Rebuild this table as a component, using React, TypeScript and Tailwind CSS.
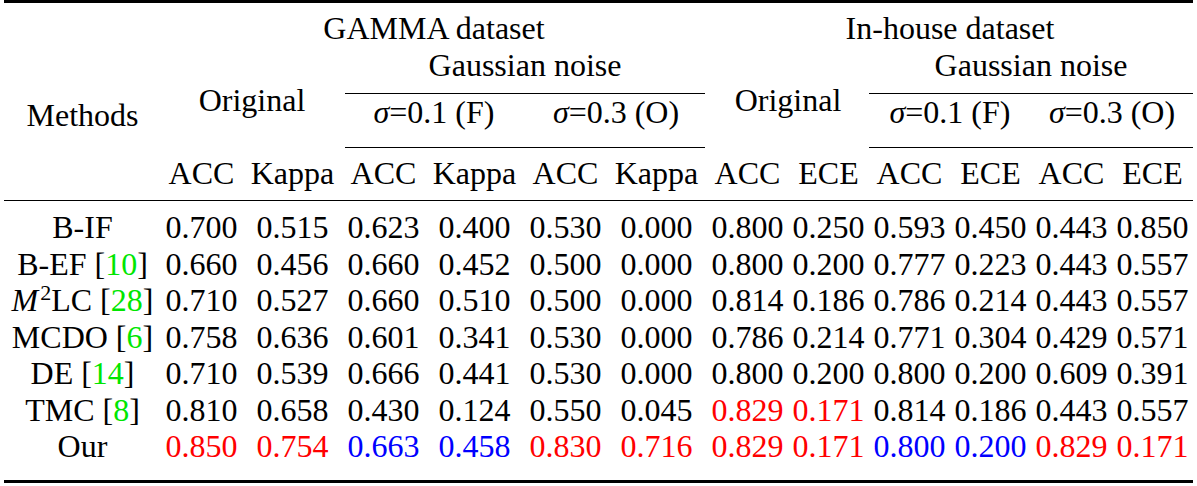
import type { ReactNode } from "react";

type Row = { method: ReactNode; values: string[]; colors: string };

const cite = (n: string) => (
  <>
    {" "}[<span className="text-[#00e600]">{n}</span>]
  </>
);

const rows: Row[] = [
  {
    method: "B-IF",
    values: ["0.700", "0.515", "0.623", "0.400", "0.530", "0.000", "0.800", "0.250", "0.593", "0.450", "0.443", "0.850"],
    colors: "kkkkkkkkkkkk",
  },
  {
    method: <>B-EF{cite("10")}</>,
    values: ["0.660", "0.456", "0.660", "0.452", "0.500", "0.000", "0.800", "0.200", "0.777", "0.223", "0.443", "0.557"],
    colors: "kkkkkkkkkkkk",
  },
  {
    method: (
      <>
        <i>M</i>
        <sup className="ml-[2px] text-[22px]">2</sup>LC{cite("28")}
      </>
    ),
    values: ["0.710", "0.527", "0.660", "0.510", "0.500", "0.000", "0.814", "0.186", "0.786", "0.214", "0.443", "0.557"],
    colors: "kkkkkkkkkkkk",
  },
  {
    method: <>MCDO{cite("6")}</>,
    values: ["0.758", "0.636", "0.601", "0.341", "0.530", "0.000", "0.786", "0.214", "0.771", "0.304", "0.429", "0.571"],
    colors: "kkkkkkkkkkkk",
  },
  {
    method: <>DE{cite("14")}</>,
    values: ["0.710", "0.539", "0.666", "0.441", "0.530", "0.000", "0.800", "0.200", "0.800", "0.200", "0.609", "0.391"],
    colors: "kkkkkkkkkkkk",
  },
  {
    method: <>TMC{cite("8")}</>,
    values: ["0.810", "0.658", "0.430", "0.124", "0.550", "0.045", "0.829", "0.171", "0.814", "0.186", "0.443", "0.557"],
    colors: "kkkkkkrrkkkk",
  },
  {
    method: "Our",
    values: ["0.850", "0.754", "0.663", "0.458", "0.830", "0.716", "0.829", "0.171", "0.800", "0.200", "0.829", "0.171"],
    colors: "rrbbrrrrbbrr",
  },
];

const colorClass: Record<string, string> = {
  k: "text-black",
  r: "text-[#ff0000]",
  b: "text-[#0000ff]",
};

const metrics = ["ACC", "Kappa", "ACC", "Kappa", "ACC", "Kappa", "ACC", "ECE", "ACC", "ECE", "ACC", "ECE"];

const cols = "grid-cols-[157px_81px_101px_81px_101px_81px_101px_81px_81px_81px_81px_81px_81px]";

const Sigma = ({ v, l }: { v: string; l: string }) => (
  <>
    <i>σ</i>={v} ({l})
  </>
);

export default function App() {
  return (
    <div className="h-[486px] w-[1197px] bg-white pl-[4px] text-black font-['Liberation_Serif',serif] text-[32px]">
      <div className="w-[1189px]">
        <div className="h-[3px] bg-black" />

        <div className={`grid ${cols} grid-rows-[44px_46px_1px_53px_1px_52px] text-center leading-[36px] whitespace-nowrap`}>
          <div className="col-start-1 row-start-1 row-span-6 pt-[94px]">Methods</div>

          <div className="col-start-2 col-span-6 row-start-1 pt-[7px]">GAMMA dataset</div>
          <div className="col-start-8 col-span-6 row-start-1 pt-[7px]">In-house dataset</div>

          <div className="col-start-2 col-span-2 row-start-2 row-span-4 pt-[35px]">Original</div>
          <div className="col-start-8 col-span-2 row-start-2 row-span-4 pt-[35px]">Original</div>

          <div className="col-start-4 col-span-4 row-start-2">Gaussian noise</div>
          <div className="col-start-10 col-span-4 row-start-2">Gaussian noise</div>

          <div className="col-start-4 col-span-4 row-start-3 mx-[2px] bg-black" />
          <div className="col-start-10 col-span-4 row-start-3 bg-black" />

          <div className="col-start-4 col-span-2 row-start-4">
            <Sigma v="0.1" l="F" />
          </div>
          <div className="col-start-6 col-span-2 row-start-4">
            <Sigma v="0.3" l="O" />
          </div>
          <div className="col-start-10 col-span-2 row-start-4">
            <Sigma v="0.1" l="F" />
          </div>
          <div className="col-start-12 col-span-2 row-start-4">
            <Sigma v="0.3" l="O" />
          </div>

          <div className="col-start-4 col-span-4 row-start-5 mx-[2px] bg-black" />
          <div className="col-start-10 col-span-4 row-start-5 bg-black" />

          <div className="col-start-1 row-start-6" />
          {metrics.map((m, i) => (
            <div key={i} className="row-start-6 pt-[7px]">
              {m}
            </div>
          ))}
        </div>

        <div className="h-px bg-black" />

        <div className={`grid ${cols} auto-rows-[36.5px] pt-[8px] pb-[15.5px] text-center leading-[36.5px] whitespace-nowrap`}>
          {rows.map((r, ri) => (
            <div key={ri} className="contents">
              <div>{r.method}</div>
              {r.values.map((v, vi) => (
                <div key={vi} className={colorClass[r.colors[vi]]}>
                  {v}
                </div>
              ))}
            </div>
          ))}
        </div>

        <div className="h-[3px] bg-black" />
      </div>
    </div>
  );
}
